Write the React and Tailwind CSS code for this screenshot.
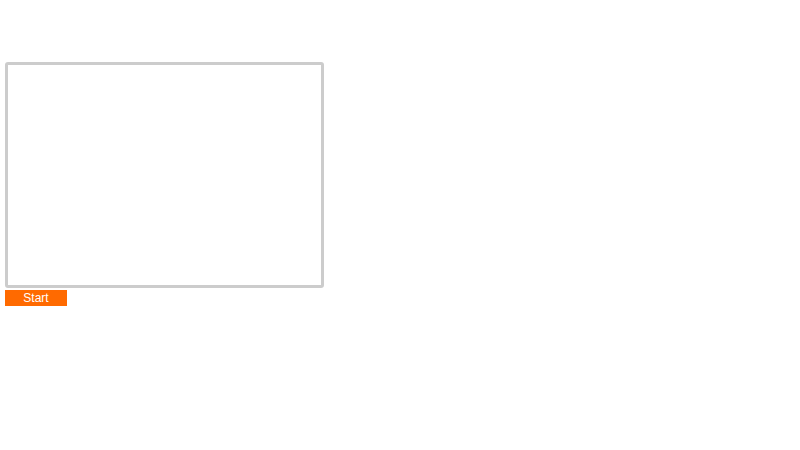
export default function App() {
  return (
    <div className="w-[800px] h-[450px] bg-white pt-[62px] pl-[5px] font-['Liberation_Sans',Arial,sans-serif]">
      {/* drawing area */}
      <div className="w-[319px] h-[226px] border-[3px] border-[#cccccc] rounded-[3px] bg-white" />
      <button className="mt-[2px] block w-[62px] h-[16px] bg-[#ff6a00] text-white text-[12px] leading-[16px] text-center">
        Start
      </button>
    </div>
  );
}
